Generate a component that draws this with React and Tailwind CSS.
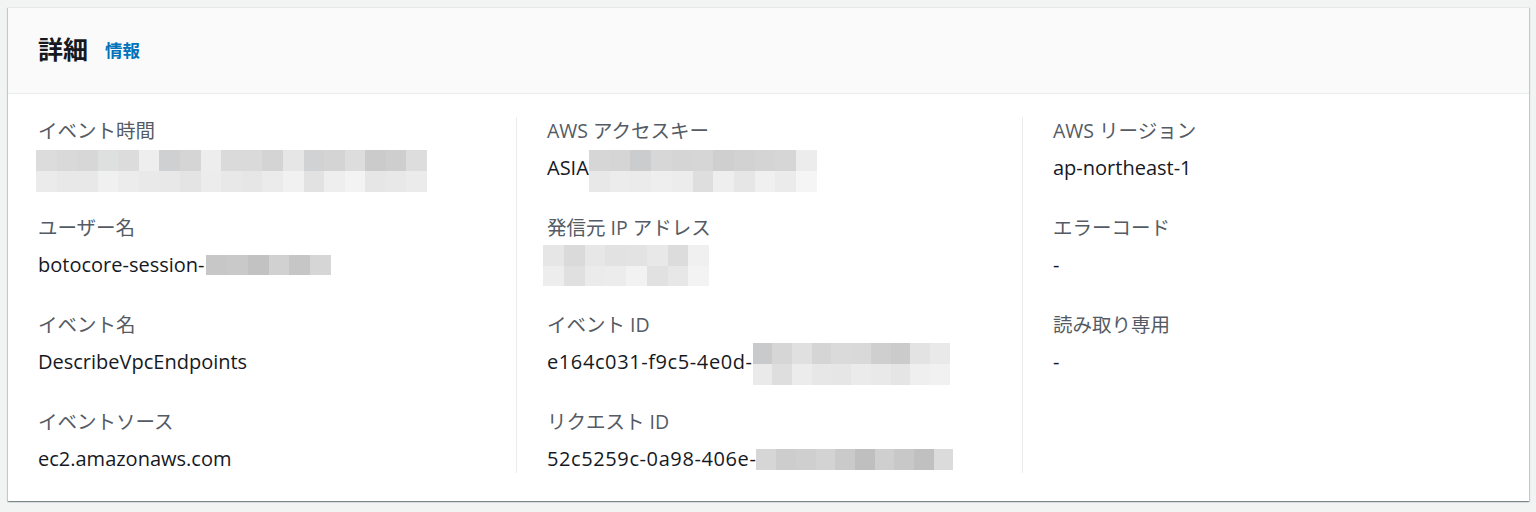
import React from 'react'

// Pixelated redaction blocks, rows of grey levels (hex without #)
const TIME_BLUR = [
  ['dcdcdc', 'd9d9d9', 'd7d7d7', 'dedfdf', 'dcdcdc', 'eeeeee', 'cfd0d2', 'd5d5d5', 'ededed', 'dadada', 'dadada', 'd4d4d4', 'e6e6e6', 'd1d2d3', 'd4d4d4', 'dddddd', 'cbcbcb', 'cecece', 'dddddd'],
  ['ebebeb', 'e8e8e8', 'e8e8e8', 'f0f0f0', 'ececec', 'e9e9e9', 'e8e8e8', 'e4e4e4', 'ececec', 'e8e8e8', 'e6e6e6', 'ebebeb', 'f1f1f1', 'e2e2e2', 'eeeeee', 'f3f3f3', 'e6e6e6', 'e8e8e8', 'ebebeb'],
]
const KEY_BLUR = [
  ['d6d6d6', 'd5d5d5', 'cbcccd', 'd7d7d7', 'd5d5d5', 'd6d6d6', 'cfcfcf', 'd2d2d2', 'd4d4d4', 'd6d6d6', 'ececec'],
  ['e8e8e8', 'ececec', 'ebebeb', 'eeeeee', 'ececec', 'dedede', 'eeeeee', 'e6e6e6', 'f0f0f0', 'ebebeb', 'f5f5f5'],
]
const IP_BLUR = [
  ['e6e6e6', 'dadada', 'e7e7e7', 'e2e2e2', 'e3e3e3', 'e8e8e8', 'dcdcdc', 'f0f0f0'],
  ['ededed', 'e0e0e0', 'ebebeb', 'ececec', 'f2f2f2', 'e1e1e1', 'e7e7e7', 'f3f3f3'],
]
const USER_BLUR = [['c7c7c7', 'c9c9c9', 'c2c2c2', 'd1d1d1', 'c6c6c6', 'd6d6d6']]
const EVENT_ID_BLUR = [
  ['c9cacb', 'd6d6d6', 'e0e0e0', 'd5d5d5', 'dadada', 'd9d9d9', 'cfcfcf', 'cbcbcb', 'e3e3e3', 'e9e9e9'],
  ['eaeaea', 'dedede', 'ececec', 'e7e7e7', 'e6e6e6', 'ebebeb', 'e9e9e9', 'e5e5e5', 'efefef', 'f1f1f1'],
]
const REQ_ID_BLUR = [['d6d6d6', 'cdcdcd', 'cfcfcf', 'd3d3d3', 'cacaca', 'bfbfbf', 'cfcfcf', 'c8c8c8', 'c0c0c0', 'dbdbdb']]

function Blur({ rows, className }) {
  return (
    <div className={`flex flex-col shrink-0 ${className}`}>
      {rows.map((row, i) => (
        <div key={i} className="flex flex-1">
          {row.map((c, j) => (
            <div key={j} className="flex-1" style={{ background: `#${c}` }} />
          ))}
        </div>
      ))}
    </div>
  )
}

function Field({ label, children }) {
  return (
    <div>
      <div className="leading-[28px] text-[19.5px] text-[#545b64]">{label}</div>
      <div className="mt-[9px] h-[28px] flex items-center text-[20px] text-[#16191f] whitespace-nowrap">{children}</div>
    </div>
  )
}

export default function App() {
  return (
    <div
      className="h-[512px] bg-[#f2f3f3] pt-[7px] pl-[8px] pr-[7px] overflow-hidden"
      style={{ fontFamily: '"Open Sans", "Noto Sans CJK JP", sans-serif' }}
    >
      <div className="bg-white border-t border-[#e6e8e8] shadow-[0_1px_1px_0_rgba(0,28,36,0.3),1px_1px_1px_0_rgba(0,28,36,0.15),-1px_1px_1px_0_rgba(0,28,36,0.15)]">
        {/* header */}
        <div className="h-[86px] bg-[#fafafa] border-b border-[#eaeded] flex items-center pl-[30px] pb-[2px]">
          <h2 className="text-[25px] font-bold text-[#16191f] leading-none">詳細</h2>
          <a className="ml-[17px] text-[17.5px] font-bold text-[#0073bb] leading-none mt-[2px]">情報</a>
        </div>

        {/* body */}
        <div className="grid grid-cols-[478px_506px_1fr] pl-[30px] pt-[23px] pb-[28px]">
          <div className="flex flex-col gap-[32px]">
            <Field label="イベント時間">
              <Blur rows={TIME_BLUR} className="w-[391px] h-[42px] -ml-[2px] mt-[5px]" />
            </Field>
            <Field label="ユーザー名">
              <span>botocore-session-</span>
              <Blur rows={USER_BLUR} className="w-[124px] h-[20px] ml-[2px]" />
            </Field>
            <Field label="イベント名">DescribeVpcEndpoints</Field>
            <Field label="イベントソース">ec2.amazonaws.com</Field>
          </div>

          <div className="flex flex-col gap-[32px] border-l border-[#eaeded] pl-[30px]">
            <Field label="AWS アクセスキー">
              <span>ASIA</span>
              <Blur rows={KEY_BLUR} className="w-[228px] h-[42px] mt-[5px]" />
            </Field>
            <Field label="発信元 IP アドレス">
              <Blur rows={IP_BLUR} className="w-[166px] h-[41px] -ml-[4px] mt-[1px]" />
            </Field>
            <Field label="イベント ID">
              <span className="tracking-[0.6px]">e164c031-f9c5-4e0d-</span>
              <Blur rows={EVENT_ID_BLUR} className="w-[197px] h-[42px] mt-[4px]" />
            </Field>
            <Field label="リクエスト ID">
              <span className="tracking-[0.6px]">52c5259c-0a98-406e-</span>
              <Blur rows={REQ_ID_BLUR} className="w-[197px] h-[21px]" />
            </Field>
          </div>

          <div className="flex flex-col gap-[32px] border-l border-[#eaeded] pl-[30px]">
            <Field label="AWS リージョン">ap-northeast-1</Field>
            <Field label="エラーコード">-</Field>
            <Field label="読み取り専用">-</Field>
          </div>
        </div>
      </div>
    </div>
  )
}
